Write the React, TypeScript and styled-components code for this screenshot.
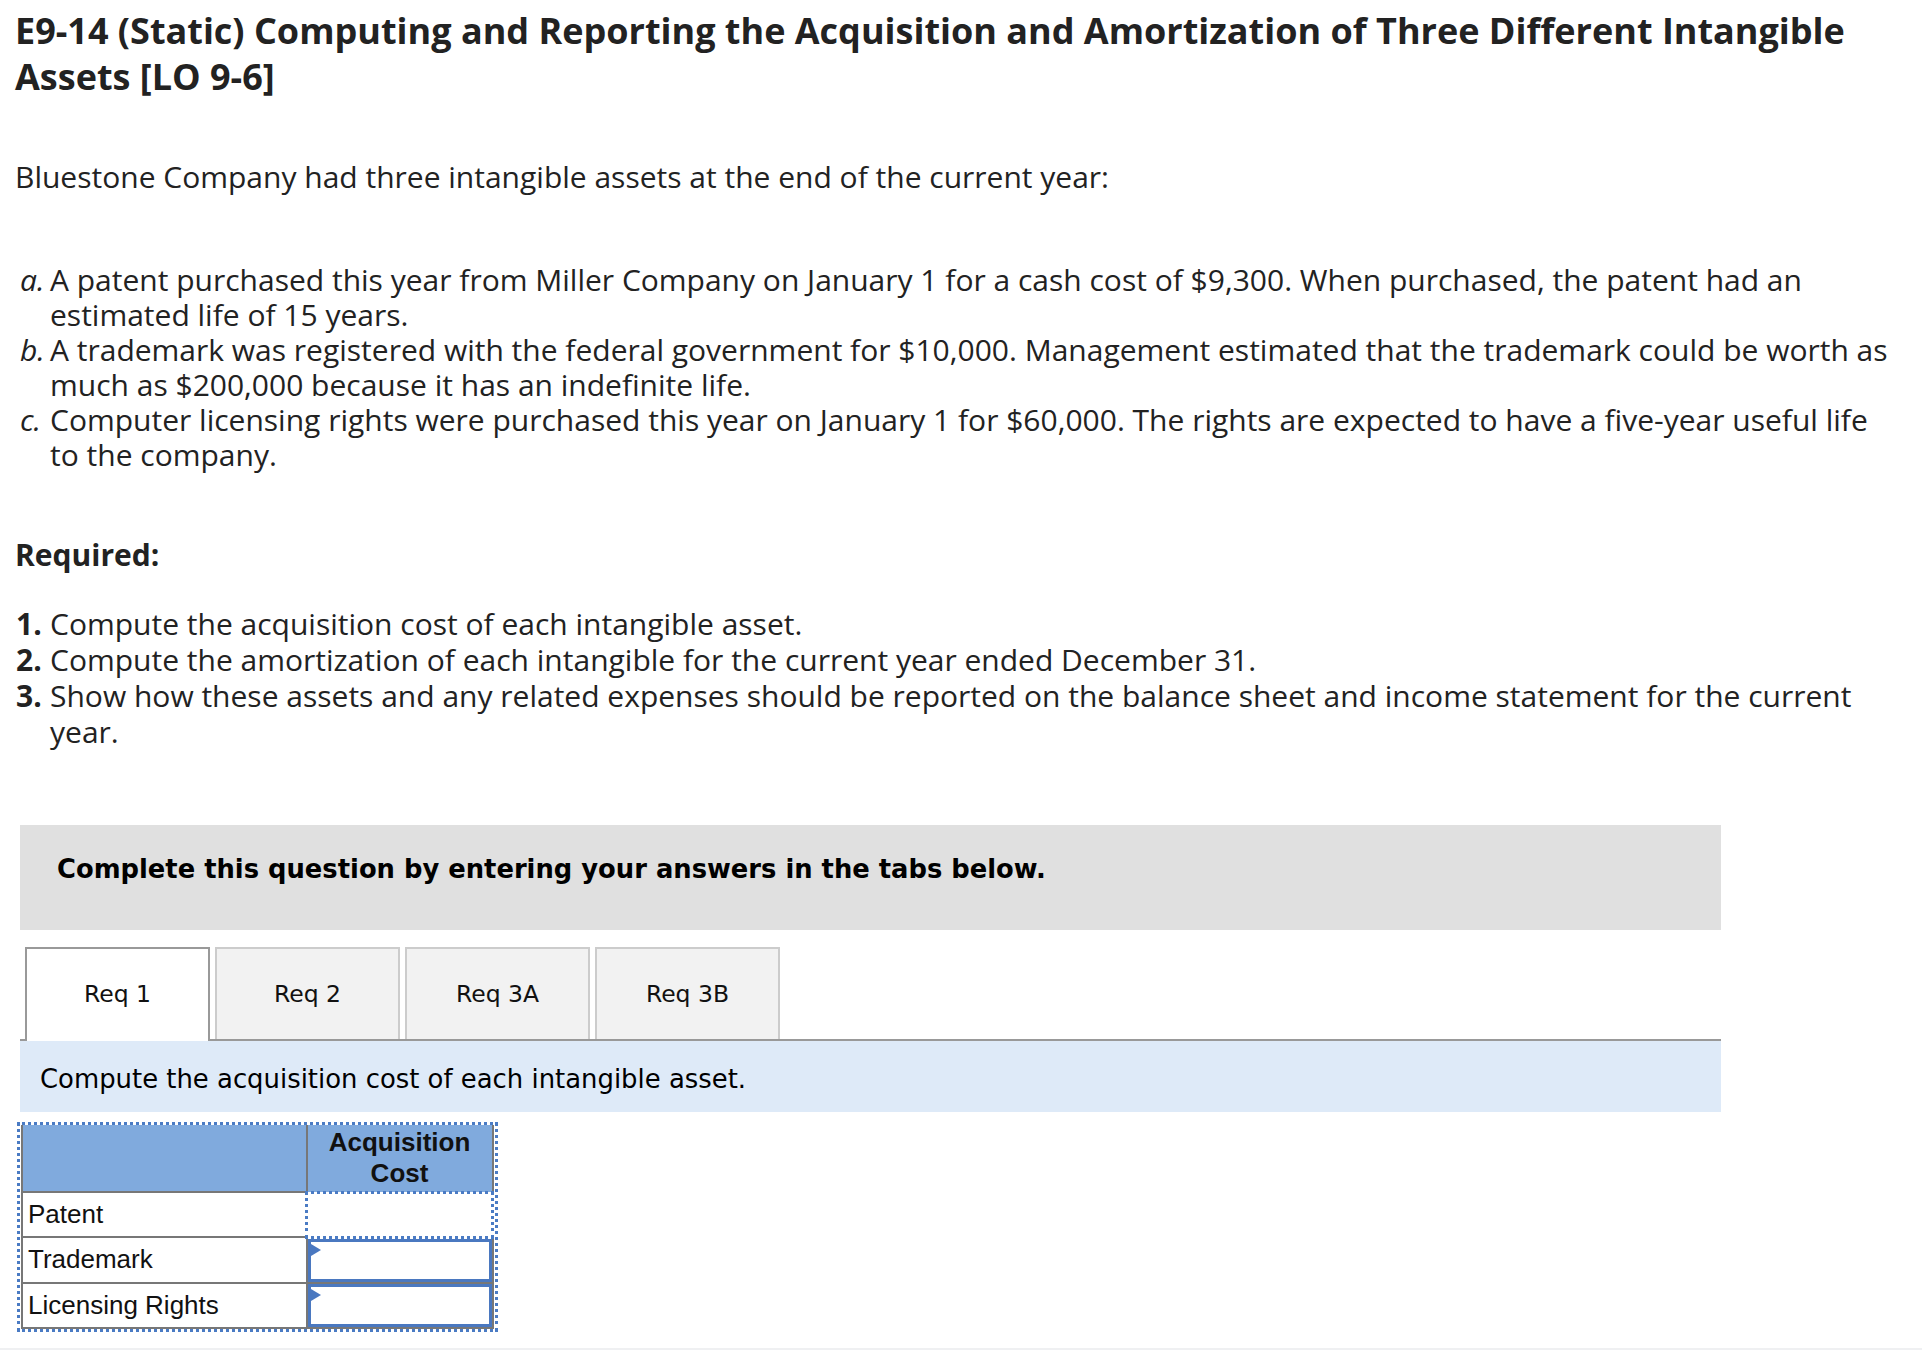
import React from 'react';
import styled, { createGlobalStyle } from 'styled-components';

const GlobalStyle = createGlobalStyle`
  body {
    margin: 0;
    background: #fff;
    color: #222;
    font-family: "Open Sans", "Noto Sans", sans-serif;
  }
`;

const Page = styled.div`
  padding: 8px 26px 0 15px;
`;

const Title = styled.h1`
  margin: 0;
  font-size: 36px;
  line-height: 45.5px;
  font-weight: 700;
  color: #222;
`;

const Intro = styled.p`
  margin: 60px 0 0;
  font-size: 30px;
  line-height: 35px;
`;

const List = styled.ol<{ $gap: number; $line: number }>`
  list-style: none;
  margin: ${(p) => p.$gap}px 0 0;
  padding: 0;
  font-size: 30px;
  line-height: ${(p) => p.$line}px;
`;

const Item = styled.li<{ $indent: number }>`
  display: flex;
  margin-left: ${(p) => p.$indent}px;
`;

const Marker = styled.span<{ $width: number; $bold?: boolean; $italic?: boolean }>`
  flex: 0 0 ${(p) => p.$width}px;
  font-weight: ${(p) => (p.$bold ? 700 : 400)};
  font-style: ${(p) => (p.$italic ? 'italic' : 'normal')};
`;

const ItemText = styled.span`
  flex: 1;
`;

const Required = styled.h2`
  margin: 65px 0 0;
  font-size: 30px;
  line-height: 35px;
  font-weight: 700;
`;

const Panel = styled.div`
  width: 1701px;
  margin-left: 5px;
  font-family: "DejaVu Sans", Verdana, sans-serif;
  color: #000;
`;

const Notice = styled.div`
  margin-top: 75px;
  height: 105px;
  box-sizing: border-box;
  padding: 29px 37px 0;
  background: #e0e0e0;
  font-size: 25.8px;
  line-height: 30px;
  font-weight: 700;
`;

const TabBar = styled.div`
  display: flex;
  align-items: flex-end;
  gap: 5px;
  margin-top: 17px;
  padding-left: 5px;
  border-bottom: 2px solid #999;
`;

const Tab = styled.button<{ $active?: boolean }>`
  width: 185px;
  height: ${(p) => (p.$active ? 94 : 92)}px;
  margin-bottom: ${(p) => (p.$active ? -2 : 0)}px;
  box-sizing: border-box;
  border: 2px solid ${(p) => (p.$active ? '#999' : '#ccc')};
  border-bottom: none;
  background: ${(p) => (p.$active ? '#fff' : '#f2f2f2')};
  font-family: "DejaVu Sans", Verdana, sans-serif;
  font-size: 23.5px;
  color: #111;
  padding: 0 0 ${(p) => (p.$active ? 2 : 0)}px;
  cursor: pointer;
`;

const Instruction = styled.div`
  height: 71px;
  box-sizing: border-box;
  padding: 23px 20px 0;
  background: #deeaf8;
  font-size: 25.9px;
  line-height: 30px;
`;

const Frame = styled.div`
  display: inline-block;
  margin: 10px 0 0 2px;
  padding: 0 1px;
  border: 3px dotted #4a7bc4;
`;

const Table = styled.table`
  border-collapse: collapse;
  font-family: "Liberation Sans", Arial, sans-serif;
  font-size: 26px;
  color: #111;
`;

const HeadCell = styled.th<{ $open?: boolean }>`
  height: 66px;
  padding: 0;
  background: #80aadd;
  border: 2px solid #777;
  border-top: none;
  border-bottom: ${(p) => (p.$open ? 'none' : '2px solid #777')};
  font-weight: 700;
  line-height: 31px;
  text-align: center;
`;

const LabelCell = styled.td<{ $open?: boolean }>`
  width: 272px;
  height: 43px;
  padding: 0 5px;
  border: 2px solid #777;
  border-right: ${(p) => (p.$open ? 'none' : '2px solid #777')};
  text-align: left;
`;

const InputCell = styled.td<{ $focused?: boolean }>`
  width: 183px;
  padding: 0;
  border: ${(p) => (p.$focused ? '3px dotted #4a7bc4' : '2px solid #777')};
`;

const InputBox = styled.div<{ $focused?: boolean }>`
  position: relative;
  height: ${(p) => (p.$focused ? 42 : 43)}px;
  box-sizing: border-box;
  border: ${(p) => (p.$focused ? 'none' : '3px solid #4a78c0')};

  &::before {
    content: '';
    display: ${(p) => (p.$focused ? 'none' : 'block')};
    position: absolute;
    top: 2px;
    left: 0;
    border-style: solid;
    border-width: 6px 0 6px 10px;
    border-color: transparent transparent transparent #4a78c0;
  }
`;

const Footer = styled.div`
  margin-top: 11px;
  height: 8px;
  background: #eff0f2;
`;

const facts = [
  {
    mark: 'a.',
    text: 'A patent purchased this year from Miller Company on January 1 for a cash cost of $9,300. When purchased, the patent had an estimated life of 15 years.',
  },
  {
    mark: 'b.',
    text: 'A trademark was registered with the federal government for $10,000. Management estimated that the trademark could be worth as much as $200,000 because it has an indefinite life.',
  },
  {
    mark: 'c.',
    text: 'Computer licensing rights were purchased this year on January 1 for $60,000. The rights are expected to have a five-year useful life to the company.',
  },
];

const tasks = [
  'Compute the acquisition cost of each intangible asset.',
  'Compute the amortization of each intangible for the current year ended December 31.',
  'Show how these assets and any related expenses should be reported on the balance sheet and income statement for the current year.',
];

const tabs = ['Req 1', 'Req 2', 'Req 3A', 'Req 3B'];
const assets = ['Patent', 'Trademark', 'Licensing Rights'];

const App: React.FC = () => {
  return (
    <>
      <GlobalStyle />
      <Page>
        <Title>
          E9-14 (Static) Computing and Reporting the Acquisition and Amortization of Three Different Intangible Assets [LO 9-6]
        </Title>
        <Intro>Bluestone Company had three intangible assets at the end of the current year:</Intro>
        <List $gap={68} $line={35}>
          {facts.map((f) => (
            <Item key={f.mark} $indent={5}>
              <Marker $width={30} $italic>
                {f.mark}
              </Marker>
              <ItemText>{f.text}</ItemText>
            </Item>
          ))}
        </List>
        <Required>Required:</Required>
        <List $gap={33.5} $line={36}>
          {tasks.map((t, i) => (
            <Item key={t} $indent={1}>
              <Marker $width={34} $bold>
                {i + 1}.
              </Marker>
              <ItemText>{t}</ItemText>
            </Item>
          ))}
        </List>
        <Panel>
          <Notice>Complete this question by entering your answers in the tabs below.</Notice>
          <TabBar>
            {tabs.map((t, i) => (
              <Tab key={t} $active={i === 0}>
                {t}
              </Tab>
            ))}
          </TabBar>
          <Instruction>Compute the acquisition cost of each intangible asset.</Instruction>
        </Panel>
        <Frame>
          <Table>
            <thead>
              <tr>
                <HeadCell />
                <HeadCell $open>
                  Acquisition
                  <br />
                  Cost
                </HeadCell>
              </tr>
            </thead>
            <tbody>
              {assets.map((a, i) => (
                <tr key={a}>
                  <LabelCell $open={i === 0}>{a}</LabelCell>
                  <InputCell $focused={i === 0}>
                    <InputBox $focused={i === 0} />
                  </InputCell>
                </tr>
              ))}
            </tbody>
          </Table>
        </Frame>
      </Page>
      <Footer />
    </>
  );
};

export default App;
